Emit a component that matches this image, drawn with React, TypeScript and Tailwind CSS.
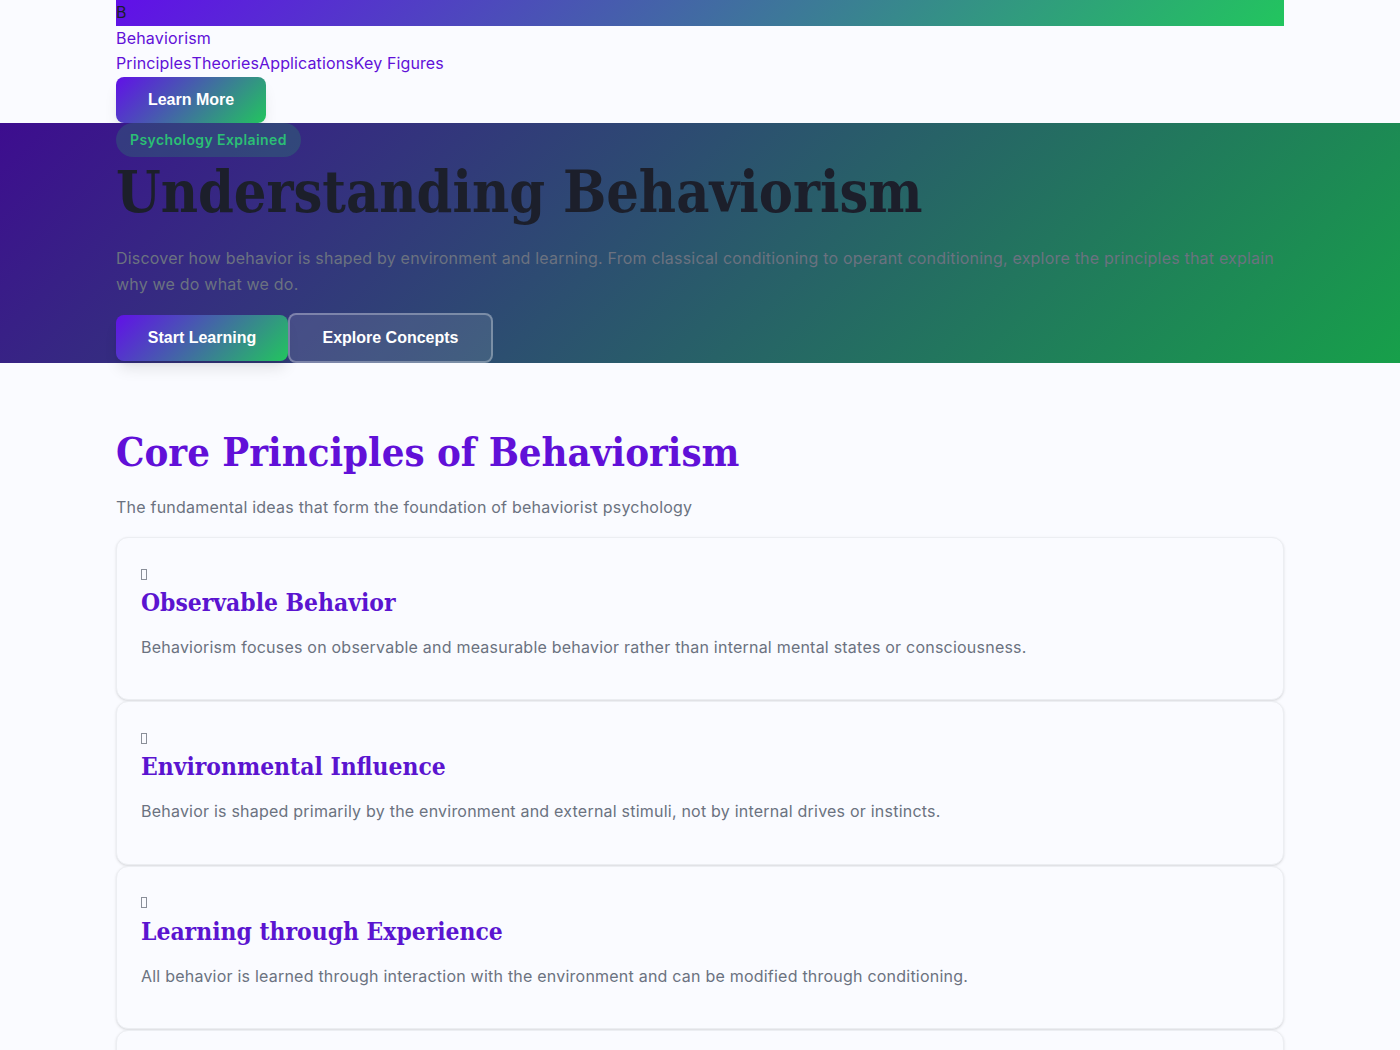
export default function App() {
  const sans = "font-['Inter',sans-serif]";
  const serif = "font-['DejaVu_Serif_Condensed','DejaVu_Serif',serif]";
  const btn = "bg-[linear-gradient(135deg,#6110e8,#22c55e)] font-['Liberation_Sans',sans-serif] text-[16px] font-bold text-white";
  const cards = [
    ["Observable Behavior", "Behaviorism focuses on observable and measurable behavior rather than internal mental states or consciousness."],
    ["Environmental Influence", "Behavior is shaped primarily by the environment and external stimuli, not by internal drives or instincts."],
    ["Learning through Experience", "All behavior is learned through interaction with the environment and can be modified through conditioning."],
  ];
  return (
    <div className={`h-[1050px] overflow-hidden bg-[#fafbff] text-[#6b7280] ${sans}`}>
      <header className="mx-auto w-[1168px]">
        <div className="h-[26px] bg-[linear-gradient(135deg,#6110e8,#22c55e)] text-[16px] leading-[25px] text-[#1c1f2b]">B</div>
        <div className="h-[25px] text-[16px] leading-[25px] tracking-[0.18px] text-[#6110d8]">Behaviorism</div>
        <nav className="flex h-[26px] text-[16px] leading-[24px] tracking-[0.12px] text-[#6110d8]">
          <a>Principles</a><a>Theories</a><a>Applications</a><a>Key Figures</a>
        </nav>
        <button className={`${btn} block h-[46px] w-[150px] rounded-lg text-center shadow-lg`}>Learn More</button>
      </header>
      <section className="h-[240px] bg-[linear-gradient(135deg,#3d0d8f,#17a04a)]">
        <div className="mx-auto w-[1168px]">
          <span className="inline-block h-[34px] rounded-full bg-[#22c55e]/20 px-[14px] text-[14px] font-semibold leading-[34px] tracking-[0.4px] text-[#2bbf75]">Psychology Explained</span>
          <h1 className={`${serif} mt-[2px] text-[57px] font-bold leading-[66px] text-[#1c1f2b]`}>Understanding Behaviorism</h1>
          <p className="mt-[20px] text-[16px] leading-[26px] tracking-[0.2px] text-[#6b7280]">Discover how behavior is shaped by environment and learning. From classical conditioning to operant conditioning, explore the principles that explain why we do what we do.</p>
          <div className="mt-[16px] flex items-center">
            <button className={`${btn} h-[46px] w-[172px] rounded-lg shadow-lg`}>Start Learning</button>
            <button className="h-[50px] w-[205px] rounded-lg border-2 border-white/30 bg-white/10 font-['Liberation_Sans',sans-serif] text-[16px] font-bold text-white">Explore Concepts</button>
          </div>
        </div>
      </section>
      <main className="mx-auto w-[1168px] pt-[64px]">
        <h2 className={`${serif} text-[39.75px] font-bold leading-[50px] text-[#6110d8]`}>Core Principles of Behaviorism</h2>
        <p className="mt-[17px] text-[16px] leading-[26px] tracking-[0.22px]">The fundamental ideas that form the foundation of behaviorist psychology</p>
        <div className="mt-[17px] flex flex-col gap-[1px]">
          {cards.map(([t, d]) => (
            <div key={t} className="h-[163.4px] rounded-xl border border-[#eceef2] bg-[#fafbff] px-[24px] pt-[24px] shadow-sm">
              <div className="flex h-[24px] items-center"><span className="block h-[11px] w-[6px] border border-[#8a8f99]" /></div>
              <h3 className={`${serif} mt-[2px] text-[24.4px] font-bold leading-[30px] text-[#5b14d0]`}>{t}</h3>
              <p className="mt-[16px] text-[16px] leading-[26px] tracking-[0.22px]">{d}</p>
            </div>
          ))}
          <div className="h-[163.4px] rounded-xl border border-[#eceef2] bg-[#fafbff] shadow-sm" />
        </div>
      </main>
    </div>
  );
}
